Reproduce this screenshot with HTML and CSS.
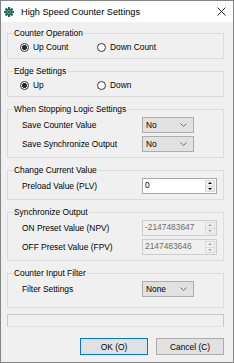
FILE: index.html
```html
<!DOCTYPE html>
<html lang="en">
<head>
    <meta charset="UTF-8">
    <meta name="viewport" content="width=device-width, initial-scale=1.0">
    <title>High Speed Counter Settings</title>
    <link rel="stylesheet" href="styles.css">
</head>
<body>
    <div class="window">
        <div class="titlebar">
            <svg class="app-icon" width="10" height="10" viewBox="0 0 10 10">
                <g fill="#1d6a58">
                    <rect x="4" y="0" width="2" height="10"/>
                    <rect x="0" y="4" width="10" height="2"/>
                    <rect x="4" y="0" width="2" height="10" transform="rotate(45 5 5)"/>
                    <rect x="4" y="0" width="2" height="10" transform="rotate(-45 5 5)"/>
                    <circle cx="5" cy="5" r="3.6"/>
                </g>
                <circle cx="5" cy="5" r="2" fill="#5fb39c"/>
                <circle cx="5" cy="5" r="0.9" fill="#0f3f34"/>
            </svg>
            <span class="title">High Speed Counter Settings</span>
            <svg class="close" width="9" height="9" viewBox="0 0 9 9">
                <path d="M0.5 0.5 L8.5 8.5 M8.5 0.5 L0.5 8.5" stroke="#2b2b2b" stroke-width="1"/>
            </svg>
        </div>

        <div class="content">
            <fieldset class="group">
                <legend>Counter Operation</legend>
                <div class="radios">
                    <label class="radio checked"><span class="dot"></span>Up Count</label>
                    <label class="radio"><span class="dot"></span>Down Count</label>
                </div>
            </fieldset>

            <fieldset class="group">
                <legend>Edge Settings</legend>
                <div class="radios">
                    <label class="radio checked"><span class="dot"></span>Up</label>
                    <label class="radio"><span class="dot"></span>Down</label>
                </div>
            </fieldset>

            <fieldset class="group">
                <legend>When Stopping Logic Settings</legend>
                <div class="row">
                    <span class="label">Save Counter Value</span>
                    <div class="combo">No<svg class="chevron" width="7" height="4" viewBox="0 0 7 4"><path d="M0.5 0.5 L3.5 3.5 L6.5 0.5" fill="none" stroke="#707070"/></svg></div>
                </div>
                <div class="row">
                    <span class="label">Save Synchronize Output</span>
                    <div class="combo">No<svg class="chevron" width="7" height="4" viewBox="0 0 7 4"><path d="M0.5 0.5 L3.5 3.5 L6.5 0.5" fill="none" stroke="#707070"/></svg></div>
                </div>
            </fieldset>

            <fieldset class="group">
                <legend>Change Current Value</legend>
                <div class="row">
                    <span class="label">Preload Value (PLV)</span>
                    <div class="spin">
                        <span class="spin-value">0</span>
                        <div class="spin-btns">
                            <span class="spin-up"></span>
                            <span class="spin-down"></span>
                        </div>
                    </div>
                </div>
            </fieldset>

            <fieldset class="group">
                <legend>Synchronize Output</legend>
                <div class="row">
                    <span class="label">ON Preset Value (NPV)</span>
                    <div class="spin disabled">
                        <span class="spin-value">-2147483647</span>
                        <div class="spin-btns">
                            <span class="spin-up"></span>
                            <span class="spin-down"></span>
                        </div>
                    </div>
                </div>
                <div class="row">
                    <span class="label">OFF Preset Value (FPV)</span>
                    <div class="spin disabled">
                        <span class="spin-value">2147483646</span>
                        <div class="spin-btns">
                            <span class="spin-up"></span>
                            <span class="spin-down"></span>
                        </div>
                    </div>
                </div>
            </fieldset>

            <fieldset class="group last">
                <legend>Counter Input Filter</legend>
                <div class="row">
                    <span class="label">Filter Settings</span>
                    <div class="combo">None<svg class="chevron" width="7" height="4" viewBox="0 0 7 4"><path d="M0.5 0.5 L3.5 3.5 L6.5 0.5" fill="none" stroke="#707070"/></svg></div>
                </div>
            </fieldset>

            <div class="status"></div>

            <div class="buttons">
                <button class="btn default">OK (O)</button>
                <button class="btn">Cancel (C)</button>
            </div>
        </div>
    </div>
</body>
</html>
```

FILE: styles.css
```css
* {
    box-sizing: border-box;
}

body {
    margin: 0;
    background-color: #f0f0f0;
    font-family: "Liberation Sans", Arial, sans-serif;
    font-size: 8.4px;
    color: #000;
}

.window {
    width: 234px;
    height: 363px;
    border: 1px solid #858585;
    background-color: #f0f0f0;
}

.titlebar {
    display: flex;
    align-items: center;
    height: 21px;
    padding-left: 3px;
    background-color: #fff;
}

.app-icon {
    flex: none;
}

.title {
    margin-left: 7px;
    font-size: 9.2px;
    color: #000;
}

.close {
    margin-left: auto;
    margin-right: 7px;
}

.content {
    padding: 6px 9px 0 6px;
}

.group {
    margin: 0 0 7px 0;
    padding: 3px 0 5px 5px;
    border: 1px solid #dcdcdc;
    min-width: 0;
}

.group legend {
    padding: 0 1px;
    line-height: 10px;
    height: 10px;
}

.group.last {
    padding-bottom: 10px;
    margin-bottom: 6px;
}

.radios {
    display: flex;
    align-items: center;
    height: 12px;
    padding-left: 7px;
}

.radio {
    display: flex;
    align-items: center;
    width: 77px;
}

.dot {
    width: 9px;
    height: 9px;
    border: 1px solid #333;
    border-radius: 50%;
    background-color: #fff;
    margin-right: 4px;
}

.radio.checked .dot {
    background: radial-gradient(circle, #2a2a2a 0 2.2px, #fff 2.8px);
}

.row {
    display: flex;
    align-items: center;
    height: 16px;
    padding-left: 9px;
}

.row + .row {
    margin-top: 3px;
}

.label {
    width: 120px;
}

.combo {
    display: flex;
    align-items: center;
    width: 52px;
    height: 16px;
    padding: 0 6px 0 3px;
    border: 1px solid #adadad;
    background-color: #e1e1e1;
}

.chevron {
    margin-left: auto;
}

.spin {
    display: flex;
    width: 75px;
    height: 16px;
    border: 1px solid #a9a9a9;
    background-color: #fff;
}

.spin-value {
    flex: 1;
    padding-left: 2px;
    line-height: 13px;
}

.spin-btns {
    display: flex;
    flex-direction: column;
    width: 11px;
    padding: 1px 1px 1px 0;
}

.spin-up,
.spin-down {
    flex: 1;
    display: flex;
    align-items: center;
    justify-content: center;
    background-color: #f0f0f0;
    border: 1px solid #dadada;
}

.spin-down {
    border-top: none;
}

.spin-up::after {
    content: "";
    border-left: 2px solid transparent;
    border-right: 2px solid transparent;
    border-bottom: 2.5px solid #000;
}

.spin-down::after {
    content: "";
    border-left: 2px solid transparent;
    border-right: 2px solid transparent;
    border-top: 2.5px solid #000;
}

.spin.disabled {
    border-color: #cccccc;
    background-color: #f0f0f0;
    color: #6d6d6d;
}

.spin.disabled .spin-up::after {
    border-bottom-color: #a0a0a0;
}

.spin.disabled .spin-down::after {
    border-top-color: #a0a0a0;
}

.status {
    height: 13px;
    border: 1px solid #c8c8c8;
    border-bottom-color: #e3e3e3;
}

.buttons {
    display: flex;
    justify-content: flex-end;
    gap: 8px;
    margin-top: 11px;
}

.btn {
    width: 68px;
    height: 17px;
    padding: 0;
    border: 1px solid #adadad;
    background-color: #e1e1e1;
    font-family: inherit;
    font-size: 8.4px;
    color: #000;
}

.btn.default {
    border-color: #0078d7;
}
```
